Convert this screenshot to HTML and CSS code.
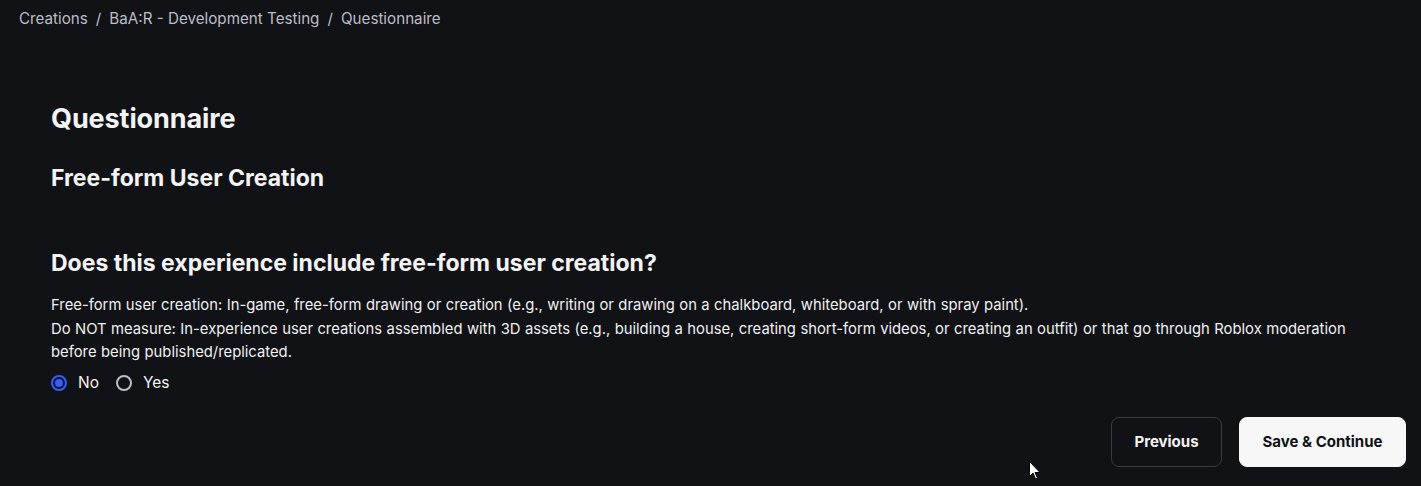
FILE: index.html
```html
<!DOCTYPE html>
<html lang="en">
<head>
<meta charset="utf-8">
<title>Questionnaire</title>
<link rel="stylesheet" href="styles.css">
</head>
<body>
<div class="page">
  <nav class="crumbs">
    <span>Creations</span><span class="sep">/</span><span>BaA:R - Development Testing</span><span class="sep">/</span><span>Questionnaire</span>
  </nav>
  <main class="content">
    <h1 class="title">Questionnaire</h1>
    <h2 class="section">Free-form User Creation</h2>
    <h3 class="question">Does this experience include free-form user creation?</h3>
    <p class="desc">Free-form user creation: In-game, free-form drawing or creation (e.g., writing or drawing on a chalkboard, whiteboard, or with spray paint).<br>Do NOT measure: In-experience user creations assembled with 3D assets (e.g., building a house, creating short-form videos, or creating an outfit) or that go through Roblox moderation before being published/replicated.</p>
    <div class="radios">
      <label class="radio"><span class="dot checked"></span>No</label>
      <label class="radio"><span class="dot"></span>Yes</label>
    </div>
  </main>
  <div class="actions">
    <button class="btn secondary">Previous</button>
    <button class="btn primary">Save &amp; Continue</button>
  </div>
  <svg class="cursor" width="12" height="19" viewBox="0 0 12 19"><path d="M0.5 0.5 L0.5 15.5 L4 12 L6.5 18 L8.5 17 L6 11.5 L11 11.5 Z" fill="#fff" stroke="#000" stroke-width="1"/></svg>
</div>
</body>
</html>
```
FILE: styles.css
```css
html, body {
  margin: 0;
  padding: 0;
  background: #111216;
}
body {
  font-family: Inter, "Noto Sans", sans-serif;
  color: #f4f4f5;
}
.page {
  position: relative;
  width: 1421px;
  height: 486px;
  overflow: hidden;
}
.crumbs {
  padding: 9px 19px 0;
  font-size: 15.2px;
  line-height: 20px;
  color: #bcbec8;
  display: flex;
}
.crumbs .sep {
  margin: 0 8px;
}
.content {
  padding: 0 51px;
}
.title {
  margin: 74px 0 0;
  font-size: 27px;
  line-height: 32px;
  font-weight: 700;
  letter-spacing: -0.1px;
}
.section {
  margin: 29px 0 0;
  font-size: 23px;
  line-height: 28px;
  font-weight: 700;
}
.question {
  margin: 57px 0 0;
  font-size: 23px;
  line-height: 28px;
  font-weight: 700;
}
.desc {
  margin: 17px 0 0;
  font-size: 14.8px;
  line-height: 23.5px;
  color: #f0f0f2;
  word-spacing: 0.3px;
}
.radios {
  display: flex;
  gap: 17px;
  margin-top: 8px;
}
.radio {
  display: flex;
  align-items: center;
  gap: 11px;
  font-size: 15.5px;
  line-height: 20px;
}
.dot {
  width: 12px;
  height: 12px;
  border: 2px solid #bcbec8;
  border-radius: 50%;
  box-sizing: content-box;
  position: relative;
}
.dot.checked {
  border-color: #335fff;
}
.dot.checked::after {
  content: "";
  position: absolute;
  left: 2px;
  top: 2px;
  width: 8px;
  height: 8px;
  border-radius: 50%;
  background: #335fff;
}
.actions {
  display: flex;
  justify-content: flex-end;
  gap: 17px;
  padding: 0 15px;
  margin-top: 24px;
}
.btn {
  font-family: inherit;
  font-size: 15px;
  font-weight: 700;
  height: 50px;
  border-radius: 8px;
  padding: 0 22px;
  cursor: pointer;
}
.btn.secondary {
  background: transparent;
  color: #f4f4f5;
  border: 1px solid #3a3b40;
  width: 111px;
}
.btn.primary {
  background: #f7f7f8;
  color: #111216;
  border: 1px solid #f7f7f8;
  width: 167px;
}
.cursor {
  position: absolute;
  left: 1029px;
  top: 461px;
}
```
